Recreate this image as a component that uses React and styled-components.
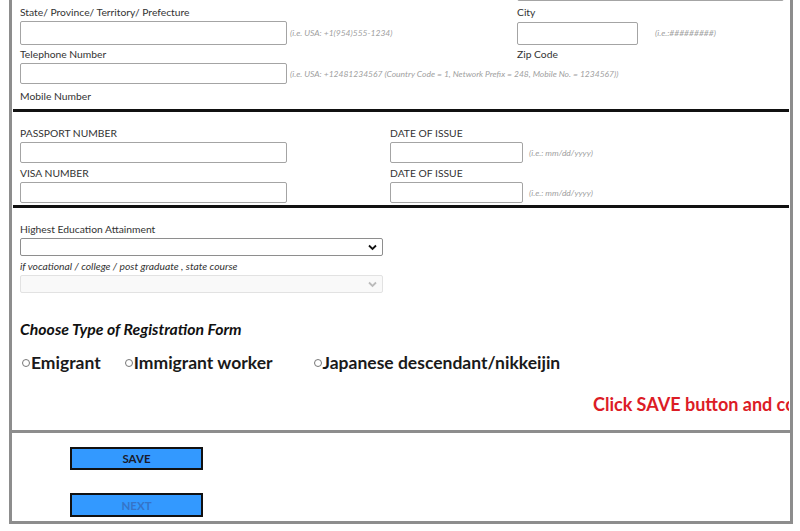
import React from "react";
import styled, { createGlobalStyle } from "styled-components";

const GlobalStyle = createGlobalStyle`
  html, body {
    margin: 0;
    padding: 0;
    background: #fff;
    overflow: hidden;
  }
  body {
    font-family: Lato, "Open Sans", sans-serif;
    color: #333;
  }
`;

const Frame = styled.div`
  margin: -22px 0 0 9px;
  width: 778px;
  border: 3px solid #8d8d8d;
  border-top: none;
  background: #fff;
`;

const Section = styled.div`
  margin: 0 1px;
  padding: 0 0 ${({ $pb }) => $pb || 0}px 7px;
  border-top: ${({ $line }) => ($line ? "3px solid #111" : "none")};
  overflow: hidden;
`;

const Grid = styled.div`
  display: grid;
  grid-template-columns: ${({ $cols }) => $cols};
  margin-top: ${({ $mt }) => $mt || 0}px;
  align-items: center;
`;

const Label = styled.div`
  font-size: 10.3px;
  line-height: 12px;
  color: #333;
  white-space: nowrap;
  margin-top: ${({ $mt }) => $mt || 0}px;
`;

const Cell = styled.div`
  display: flex;
  align-items: center;
  min-width: 0;
`;

const TextInput = styled.div`
  box-sizing: border-box;
  flex: none;
  width: ${({ $w }) => $w}px;
  height: ${({ $h }) => $h}px;
  border: 1px solid #a4a4a4;
  border-radius: 2px;
  background: #fff;
`;

const Hint = styled.span`
  font-size: 8.5px;
  font-style: italic;
  color: #a0a0a0;
  white-space: nowrap;
  margin-left: ${({ $ml }) => $ml || 3}px;
`;

const Select = styled.div`
  box-sizing: border-box;
  width: 363px;
  height: ${({ $h }) => $h}px;
  margin-top: 3px;
  border: 1px solid ${({ $disabled }) => ($disabled ? "#e2e2e2" : "#8e8e8e")};
  border-radius: 2px;
  background: ${({ $disabled }) => ($disabled ? "#f9f9f9" : "#fff")};
  display: flex;
  align-items: center;
  justify-content: flex-end;
  padding-right: 5px;
`;

const Note = styled.div`
  font-size: 10.3px;
  line-height: 12px;
  font-style: italic;
  color: #333;
  margin-top: 4px;
`;

const Heading = styled.div`
  margin-top: 27px;
  font-size: 15.8px;
  line-height: 18px;
  font-weight: 700;
  font-style: italic;
  color: #111;
`;

const RadioRow = styled.div`
  margin-top: 14px;
  display: flex;
  padding-left: 2px;
  height: 20px;
  align-items: center;
`;

const RadioOption = styled.label`
  display: flex;
  align-items: center;
  font-size: 17.5px;
  font-weight: 700;
  color: #1a1a1a;
  margin-right: ${({ $mr }) => $mr}px;
  white-space: nowrap;
`;

const RadioDot = styled.span`
  box-sizing: border-box;
  width: 8px;
  height: 8px;
  border: 1px solid #777;
  border-radius: 50%;
  margin-right: 1px;
  margin-top: 2px;
`;

const Notice = styled.div`
  margin-top: 22px;
  padding-left: 573px;
  font-size: 18px;
  line-height: 20px;
  font-weight: 700;
  color: #dc1c26;
  white-space: nowrap;
`;

const Footer = styled.div`
  border-top: 3px solid #8d8d8d;
  padding: 14px 0 4px 58px;
`;

const Button = styled.button`
  display: block;
  box-sizing: border-box;
  width: 133px;
  height: ${({ $h }) => $h}px;
  margin-top: ${({ $mt }) => $mt || 0}px;
  border: 2px solid #111;
  background: #3399ff;
  font-family: Lato, sans-serif;
  font-size: 11.5px;
  font-weight: 700;
  color: ${({ $muted }) => ($muted ? "#3574c8" : "#1b1b2a")};
  padding: 0;
`;

const Chevron = ({ color }) => (
  <svg width="9" height="7" viewBox="0 0 9 7">
    <path d="M1 1.5 L4.5 5 L8 1.5" fill="none" stroke={color} strokeWidth="1.8" />
  </svg>
);

export default function App() {
  return (
    <>
      <GlobalStyle />
      <Frame>
        <Section $pb={7}>
          <Grid $cols="497px 1fr">
            <div />
            <TextInput $w={267} $h={23} />
          </Grid>
          <Grid $cols="497px 1fr" $mt={5}>
            <Label>State/ Province/ Territory/ Prefecture</Label>
            <Label>City</Label>
          </Grid>
          <Grid $cols="497px 1fr" $mt={3}>
            <Cell>
              <TextInput $w={267} $h={24} />
              <Hint>(i.e. USA: +1(954)555-1234)</Hint>
            </Cell>
            <Cell>
              <TextInput $w={121} $h={23} />
              <Hint $ml={17}>(i.e.:#########)</Hint>
            </Cell>
          </Grid>
          <Grid $cols="497px 1fr" $mt={3}>
            <Label>Telephone Number</Label>
            <Label>Zip Code</Label>
          </Grid>
          <Grid $cols="497px 1fr" $mt={3}>
            <Cell>
              <TextInput $w={267} $h={21} />
              <Hint>
                (i.e. USA: +12481234567 (Country Code = 1, Network Prefix = 248, Mobile No. = 1234567))
              </Hint>
            </Cell>
            <div />
          </Grid>
          <Label $mt={6}>Mobile Number</Label>
        </Section>

        <Section $line $pb={2}>
          <Grid $cols="370px 1fr" $mt={15}>
            <Label>PASSPORT NUMBER</Label>
            <Label>DATE OF ISSUE</Label>
          </Grid>
          <Grid $cols="370px 1fr" $mt={3}>
            <Cell>
              <TextInput $w={267} $h={21} />
            </Cell>
            <Cell>
              <TextInput $w={133} $h={21} />
              <Hint $ml={6}>(i.e.: mm/dd/yyyy)</Hint>
            </Cell>
          </Grid>
          <Grid $cols="370px 1fr" $mt={4}>
            <Label>VISA NUMBER</Label>
            <Label>DATE OF ISSUE</Label>
          </Grid>
          <Grid $cols="370px 1fr" $mt={3}>
            <Cell>
              <TextInput $w={267} $h={21} />
            </Cell>
            <Cell>
              <TextInput $w={133} $h={21} />
              <Hint $ml={6}>(i.e.: mm/dd/yyyy)</Hint>
            </Cell>
          </Grid>
        </Section>

        <Section $line $pb={16}>
          <Label $mt={15}>Highest Education Attainment</Label>
          <Select $h={18}>
            <Chevron color="#111" />
          </Select>
          <Note>if vocational / college / post graduate , state course</Note>
          <Select $h={18} $disabled>
            <Chevron color="#bbb" />
          </Select>
          <Heading>Choose Type of Registration Form</Heading>
          <RadioRow>
            <RadioOption $mr={24}>
              <RadioDot />
              Emigrant
            </RadioOption>
            <RadioOption $mr={41}>
              <RadioDot />
              Immigrant worker
            </RadioOption>
            <RadioOption $mr={0}>
              <RadioDot />
              Japanese descendant/nikkeijin
            </RadioOption>
          </RadioRow>
          <Notice>Click SAVE button and continue</Notice>
        </Section>

        <Footer>
          <Button $h={23}>SAVE</Button>
          <Button $h={24} $mt={23} $muted>
            NEXT
          </Button>
        </Footer>
      </Frame>
    </>
  );
}
